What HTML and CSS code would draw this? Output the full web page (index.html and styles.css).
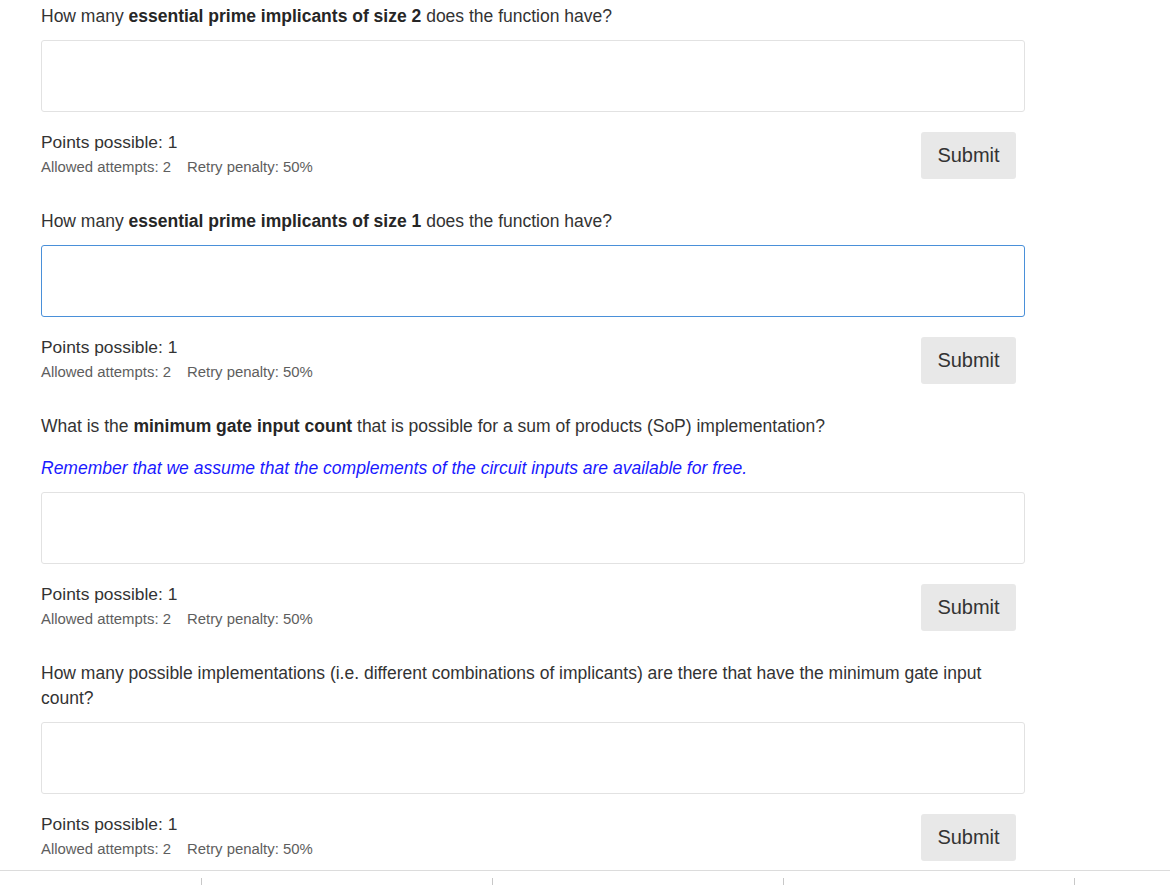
FILE: index.html
```html
<!DOCTYPE html>
<html lang="en">
<head>
<meta charset="utf-8">
<title>Problems</title>
<link rel="stylesheet" href="styles.css">
</head>
<body>
<main class="page">
  <section class="problem">
    <p class="question">How many <strong>essential prime implicants of size 2</strong> does the function have?</p>
    <input class="answer" type="text" aria-label="Answer">
    <div class="action">
      <div class="info">
        <div class="points">Points possible: 1</div>
        <div class="meta"><span>Allowed attempts: 2</span><span>Retry penalty: 50%</span></div>
      </div>
      <button class="submit" type="button">Submit</button>
    </div>
  </section>

  <section class="problem">
    <p class="question">How many <strong>essential prime implicants of size 1</strong> does the function have?</p>
    <input class="answer focused" type="text" aria-label="Answer">
    <div class="action">
      <div class="info">
        <div class="points">Points possible: 1</div>
        <div class="meta"><span>Allowed attempts: 2</span><span>Retry penalty: 50%</span></div>
      </div>
      <button class="submit" type="button">Submit</button>
    </div>
  </section>

  <section class="problem">
    <p class="question">What is the <strong>minimum gate input count</strong> that is possible for a sum of products (SoP) implementation?</p>
    <p class="question hint">Remember that we assume that the complements of the circuit inputs are available for free.</p>
    <input class="answer" type="text" aria-label="Answer">
    <div class="action">
      <div class="info">
        <div class="points">Points possible: 1</div>
        <div class="meta"><span>Allowed attempts: 2</span><span>Retry penalty: 50%</span></div>
      </div>
      <button class="submit" type="button">Submit</button>
    </div>
  </section>

  <section class="problem">
    <p class="question">How many possible implementations (i.e. different combinations of implicants) are there that have the minimum gate input count?</p>
    <input class="answer" type="text" aria-label="Answer">
    <div class="action">
      <div class="info">
        <div class="points">Points possible: 1</div>
        <div class="meta"><span>Allowed attempts: 2</span><span>Retry penalty: 50%</span></div>
      </div>
      <button class="submit" type="button">Submit</button>
    </div>
  </section>
</main>
<nav class="seq-nav">
  <div class="cell"></div>
  <div class="cell"></div>
  <div class="cell"></div>
  <div class="cell"></div>
  <div class="cell last"></div>
</nav>
</body>
</html>
```

FILE: styles.css
```css
html, body {
  margin: 0;
  padding: 0;
  overflow: hidden;
  background: #fff;
}

body {
  font-family: "Liberation Sans", Arial, sans-serif;
  color: #313131;
}

.page {
  padding: 4px 0 0 41px;
}

.problem {
  width: 984px;
  margin-bottom: 30px;
}

.problem:last-child {
  margin-bottom: 9px;
}

.question {
  margin: 0;
  font-size: 17.5px;
  line-height: 25px;
  color: #333;
}

.question strong {
  font-weight: bold;
  color: #262626;
}

.hint {
  margin-top: 17px;
  font-style: italic;
  color: #1a1aff;
}

.answer {
  display: block;
  box-sizing: border-box;
  width: 984px;
  height: 72px;
  margin: 11px 0 0 0;
  padding: 0 10px;
  border: 1px solid #e2e2e2;
  border-radius: 3px;
  background: #fff;
  font: 16px "Liberation Sans", Arial, sans-serif;
  outline: none;
}

.answer.focused {
  border-color: #4a90d9;
}

.action {
  display: flex;
  justify-content: space-between;
  align-items: flex-start;
  margin-top: 20px;
  padding-right: 9px;
}

.points {
  font-size: 17.4px;
  line-height: 20px;
  color: #333;
}

.meta {
  margin-top: 5px;
  font-size: 14.9px;
  line-height: 20px;
  color: #5e5e5e;
  display: flex;
  gap: 16px;
}

.submit {
  box-sizing: border-box;
  width: 95px;
  height: 47px;
  border: none;
  border-radius: 3px;
  background: #e8e8e8;
  color: #333;
  font: 20px "Liberation Sans", Arial, sans-serif;
  padding: 0;
}

.seq-nav {
  display: grid;
  grid-template-columns: 202px 291px 291px 291px 1fr;
  border-top: 1px solid #dcdcdc;
}

.cell {
  box-sizing: border-box;
  height: 12px;
  margin-top: 7px;
  border-right: 1px solid #c8c8c8;
}

.cell.last {
  border-right: none;
}
```
